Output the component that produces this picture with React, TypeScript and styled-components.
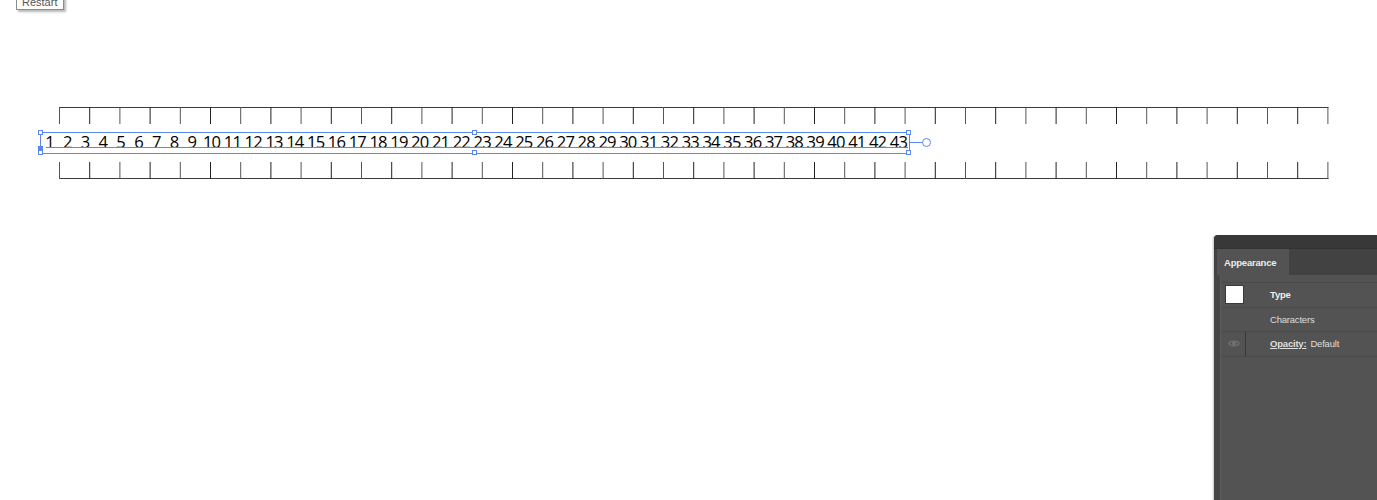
import React from "react";
import styled, { createGlobalStyle } from "styled-components";

const Global = createGlobalStyle`
  html, body { margin: 0; padding: 0; background: #ffffff; }
  body { font-family: "Open Sans", "Liberation Sans", sans-serif; }
`;

const BLUE = "#5a86f2";

const Page = styled.div`
  position: relative;
  width: 1377px;
  height: 500px;
  overflow: hidden;
  background: #ffffff;
`;

const Tooltip = styled.div`
  position: absolute;
  left: 16px;
  top: -12px;
  box-sizing: border-box;
  height: 22px;
  width: 48px;
  padding: 7px 0 0 5px;
  border: 1px solid #8c8c8c;
  background: #ffffff;
  box-shadow: 2px 2px 2px rgba(0, 0, 0, 0.28);
  font-family: "Liberation Sans", Arial, sans-serif;
  font-size: 11px;
  line-height: 13px;
  color: #555555;
`;

const Artboard = styled.div`
  display: flex;
  flex-direction: column;
  align-items: flex-start;
  padding-top: 107px;
`;

const RulerSvg = styled.svg<{ $gap: number }>`
  display: block;
  margin-left: 59px;
  margin-top: ${(p) => p.$gap}px;
`;

const TextFrame = styled.div`
  position: relative;
  box-sizing: border-box;
  margin-top: 7px;
  margin-left: 40px;
  width: 870px;
  height: 22px;
  border: 1px solid ${BLUE};
`;

const Numbers = styled.div`
  display: flex;
  align-items: flex-start;
  height: 20px;
`;

const Num = styled.span<{ $wide: boolean }>`
  flex: none;
  width: ${(p) => (p.$wide ? 20.82 : 17.8)}px;
  text-align: center;
  font-family: "Open Sans", "Liberation Sans", sans-serif;
  font-size: 16.6px;
  letter-spacing: ${(p) => (p.$wide ? -0.9 : 0)}px;
  line-height: 18px;
  color: #000000;
  white-space: nowrap;
`;

const Baseline = styled.div`
  position: absolute;
  left: 5px;
  right: 1px;
  top: 14px;
  height: 1px;
  background: ${BLUE};
`;

const Handle = styled.div<{ $x: string; $y: string; $filled?: boolean }>`
  position: absolute;
  box-sizing: border-box;
  width: 5px;
  height: 5px;
  left: ${(p) => p.$x};
  top: ${(p) => p.$y};
  border: 1px solid ${BLUE};
  background: ${(p) => (p.$filled ? BLUE : "#ffffff")};
`;

const Connector = styled.svg`
  position: absolute;
  left: 868px;
  top: 4px;
  overflow: visible;
`;

/* ---------- Appearance panel ---------- */

const Panel = styled.div`
  position: absolute;
  left: 1214px;
  top: 235px;
  right: 0;
  bottom: 0;
  display: flex;
  flex-direction: column;
  background: #454545;
  border-top-left-radius: 4px;
  box-shadow: -1px 0 0 #d4d4d4, -2px 0 1px rgba(0, 0, 0, 0.08);
  font-family: "Liberation Sans", Arial, sans-serif;
  font-size: 9.5px;
  color: #e2e2e2;
  overflow: hidden;
`;

const TitleBar = styled.div`
  height: 13px;
  background: #383838;
  border-top-left-radius: 4px;
`;

const TabBar = styled.div`
  display: flex;
  height: 27px;
  background: #424242;
  padding-left: 3px;
  border-top: 1px solid #313131;
  box-sizing: border-box;
`;

const Tab = styled.div`
  display: flex;
  align-items: center;
  width: 72px;
  padding-left: 7px;
  box-sizing: border-box;
  background: #535353;
  font-weight: 700;
  color: #ececec;
  letter-spacing: -0.2px;
`;

const Body = styled.div`
  flex: 1;
  margin-left: 6px;
  background: #535353;
  border-left: 1px solid #5c5c5c;
  padding-top: 7px;
`;

const List = styled.div`
  display: flex;
  flex-direction: column;
  border-top: 1px solid #4a4a4a;
`;

const Row = styled.div`
  display: grid;
  grid-template-columns: 25px 1fr;
  align-items: center;
  height: 23.5px;
  border-bottom: 1px solid #4a4a4a;
`;

const IconCell = styled.div<{ $divider?: boolean }>`
  display: flex;
  align-items: center;
  justify-content: center;
  height: 100%;
  box-sizing: border-box;
  border-right: 1px solid ${(p) => (p.$divider ? "#383838" : "transparent")};
  padding-left: 1px;
`;

const Swatch = styled.div`
  width: 19px;
  height: 19px;
  box-sizing: border-box;
  background: #ffffff;
  border: 1px solid #3a3a3a;
  margin-left: 2px;
`;

const Label = styled.div<{ $bold?: boolean }>`
  padding-left: 24px;
  font-weight: ${(p) => (p.$bold ? 700 : 400)};
  color: ${(p) => (p.$bold ? "#eeeeee" : "#dedede")};
  letter-spacing: -0.2px;
  white-space: nowrap;
`;

const Underlined = styled.span`
  font-weight: 700;
  text-decoration: underline;
  text-underline-offset: 1px;
  margin-right: 4px;
`;

function Ruler({ side }: { side: "top" | "bottom" }) {
  const count = 43;
  const step = 30.2;
  const ticks = Array.from({ length: count }, (_, i) => 0.5 + i * step);
  const lineY = side === "top" ? 0.5 : 17.5;
  return (
    <RulerSvg width={1271} height={18} $gap={side === "top" ? 0 : 7}>
      <line x1={0} y1={lineY} x2={1269.5} y2={lineY} stroke="#3c3c3c" strokeWidth={1} />
      {ticks.map((x, i) => (
        <line
          key={i}
          x1={x}
          x2={x}
          y1={side === "top" ? 0 : 1}
          y2={side === "top" ? 17 : 18}
          stroke={i % 2 === 1 ? "#222222" : "#555555"}
          strokeWidth={1}
        />
      ))}
    </RulerSvg>
  );
}

function Eye() {
  return (
    <svg width="12" height="9" viewBox="0 0 12 9">
      <path d="M0.8 4.5 C2.6 1.2 9.4 1.2 11.2 4.5 C9.4 7.8 2.6 7.8 0.8 4.5 Z" fill="none" stroke="#727272" strokeWidth="1.2" />
      <circle cx="6" cy="4.5" r="2" fill="#727272" />
    </svg>
  );
}

export default function App() {
  const nums = Array.from({ length: 43 }, (_, i) => i + 1);
  return (
    <Page>
      <Global />
      <Tooltip>Restart</Tooltip>
      <Artboard>
        <Ruler side="top" />
        <TextFrame>
          <Numbers>
            {nums.map((n) => (
              <Num key={n} $wide={n > 9}>
                {n}
              </Num>
            ))}
          </Numbers>
          <Baseline />
          <Handle $x="-3px" $y="-3px" />
          <Handle $x="calc(50% - 3px)" $y="-3px" />
          <Handle $x="calc(100% - 3px)" $y="-3px" />
          <Handle $x="-3px" $y="calc(100% - 3px)" />
          <Handle $x="calc(50% - 3px)" $y="calc(100% - 3px)" />
          <Handle $x="calc(100% - 3px)" $y="calc(100% - 3px)" />
          <Handle $x="-3px" $y="13px" $filled />
          <Connector width="24" height="12" viewBox="0 0 24 12">
            <line x1="1" y1="5.5" x2="13.5" y2="5.5" stroke={BLUE} strokeWidth="1" />
            <circle cx="17.5" cy="5.5" r="4" fill="#ffffff" stroke={BLUE} strokeWidth="1" />
          </Connector>
        </TextFrame>
        <Ruler side="bottom" />
      </Artboard>

      <Panel>
        <TitleBar />
        <TabBar>
          <Tab>Appearance</Tab>
        </TabBar>
        <Body>
          <List>
            <Row>
              <IconCell>
                <Swatch />
              </IconCell>
              <Label $bold>Type</Label>
            </Row>
            <Row>
              <IconCell />
              <Label>Characters</Label>
            </Row>
            <Row>
              <IconCell $divider>
                <Eye />
              </IconCell>
              <Label>
                <Underlined>Opacity:</Underlined>Default
              </Label>
            </Row>
          </List>
        </Body>
      </Panel>
    </Page>
  );
}
